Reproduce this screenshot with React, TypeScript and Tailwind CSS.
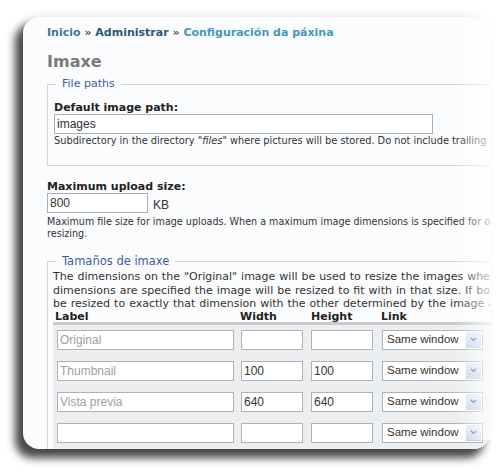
import React from 'react';

const rows = [
  { label: 'Original', w: '', h: '' },
  { label: 'Thumbnail', w: '100', h: '100' },
  { label: 'Vista previa', w: '640', h: '640' },
  { label: '', w: '', h: '' },
];

function Select() {
  return (
    <div className="flex h-[20px] w-[101px] items-center border border-[#a9b4c2] bg-white pl-[4px] pr-[1px]">
      <span className="flex-1 font-['Liberation_Sans',sans-serif] text-[11.5px] text-[#333]">Same window</span>
      <span className="flex h-[16px] w-[15px] items-center justify-center bg-gradient-to-b from-[#e3eaf8] to-[#bfd0ee]">
        <svg width="7" height="5" viewBox="0 0 7 5">
          <path d="M1 1 L3.5 3.5 L6 1" fill="none" stroke="#4d6185" strokeWidth="1.2" />
        </svg>
      </span>
    </div>
  );
}

export default function App() {
  return (
    <div className="relative h-[473px] w-[500px] overflow-hidden bg-white font-['DejaVu_Sans',sans-serif]">
      <div className="ml-[23px] mt-[17px] h-[432px] w-[467px] overflow-hidden rounded-[16px] bg-[#fbfcfd] pl-[24px] pt-[7px] shadow-[-7px_8px_9px_1px_rgba(0,0,0,0.72),0_-3px_8px_rgba(0,0,0,0.06)]">
        <div className="w-[480px]">
          <div className="text-[11px] font-bold leading-[18px]">
            <span className="text-[#3d7592]">Inicio</span>
            <span className="text-[#555]"> » </span>
            <span className="text-[#2c5873]">Administrar</span>
            <span className="text-[#555]"> » </span>
            <span className="text-[#4498ba]">Configuración da páxina</span>
          </div>
          <h1 className="mt-[10px] text-[16px] font-bold leading-[20px] text-[#7a7a7a]">Imaxe</h1>

          <fieldset className="mt-[5px] border border-[#d4d6d8] pb-[18px] pl-[6px] pr-0">
            <legend className="ml-[2px] px-[6px] text-[11px] leading-[14px] text-[#3f5ca6]">File paths</legend>
            <div className="mt-[11px] text-[11px] font-bold leading-[12px] text-[#222]">Default image path:</div>
            <input
              readOnly
              value="images"
              className="block h-[20px] w-[379px] border border-[#9fb1c2] bg-white px-[2px] font-['Liberation_Sans',sans-serif] text-[12px] text-[#333] outline-none"
            />
            <div className="whitespace-nowrap text-[9.8px] leading-[13px] text-[#333]">
              Subdirectory in the directory "<i>files</i>" where pictures will be stored. Do not include trailing slash.
            </div>
          </fieldset>

          <div className="mt-[15px] text-[11px] font-bold leading-[12px] text-[#222]">Maximum upload size:</div>
          <div className="flex items-end gap-[5px]">
            <input
              readOnly
              value="800"
              className="block h-[20px] w-[101px] border border-[#9fb1c2] bg-white px-[2px] font-['Liberation_Sans',sans-serif] text-[12px] text-[#333] outline-none"
            />
            <span className="font-['Liberation_Sans',sans-serif] text-[12px] leading-[15px] text-[#333]">KB</span>
          </div>
          <div className="mt-[3px] w-[470px] text-[9.6px] leading-[12px] text-[#333]">
            <div className="whitespace-nowrap">Maximum file size for image uploads. When a maximum image dimensions is specified for original images</div>
            <div>resizing.</div>
          </div>

          <fieldset className="mt-[14px] border border-[#d4d6d8] pl-[5px] pr-0">
            <legend className="ml-[3px] px-[6px] text-[11.5px] leading-[14px] text-[#3f5ca6]">Tamaños de imaxe</legend>
            <div className="mt-[2px] whitespace-nowrap text-[11px] leading-[13.5px] text-[#333] [word-spacing:0.5px]">
              <div>The dimensions on the "Original" image will be used to resize the images when they are first</div>
              <div>dimensions are specified the image will be resized to fit with in that size. If both dimensions</div>
              <div>be resized to exactly that dimension with the other determined by the image aspect ratio.</div>
            </div>
            <div className="flex border-b-[3px] border-[#c9cbcd] text-[11px] font-bold leading-[11px] text-[#222]">
              <div className="w-[187px] pl-[2px]">Label</div>
              <div className="w-[71px]">Width</div>
              <div className="w-[70px]">Height</div>
              <div>Link</div>
            </div>
            <div className="bg-[#eceef0] pt-[5px]">
              {rows.map((r, i) => (
                <div key={i} className="flex h-[31px] items-start pl-[4px]">
                  <input
                    readOnly
                    value={r.label}
                    className="block h-[20px] w-[177px] border border-[#a9b4c2] bg-white px-[2px] font-['Liberation_Sans',sans-serif] text-[12px] text-[#a0a0a0] outline-none"
                  />
                  <input
                    readOnly
                    value={r.w}
                    className="ml-[7px] block h-[20px] w-[62px] border border-[#a9b4c2] bg-white px-[2px] font-['Liberation_Sans',sans-serif] text-[12px] text-[#333] outline-none"
                  />
                  <input
                    readOnly
                    value={r.h}
                    className="ml-[8px] block h-[20px] w-[62px] border border-[#a9b4c2] bg-white px-[2px] font-['Liberation_Sans',sans-serif] text-[12px] text-[#333] outline-none"
                  />
                  <div className="ml-[9px]">
                    <Select />
                  </div>
                </div>
              ))}
            </div>
          </fieldset>
        </div>
      </div>
      <div className="pointer-events-none absolute right-0 top-0 h-[440px] w-[45px] bg-gradient-to-r from-white/0 to-white/95" />
    </div>
  );
}
